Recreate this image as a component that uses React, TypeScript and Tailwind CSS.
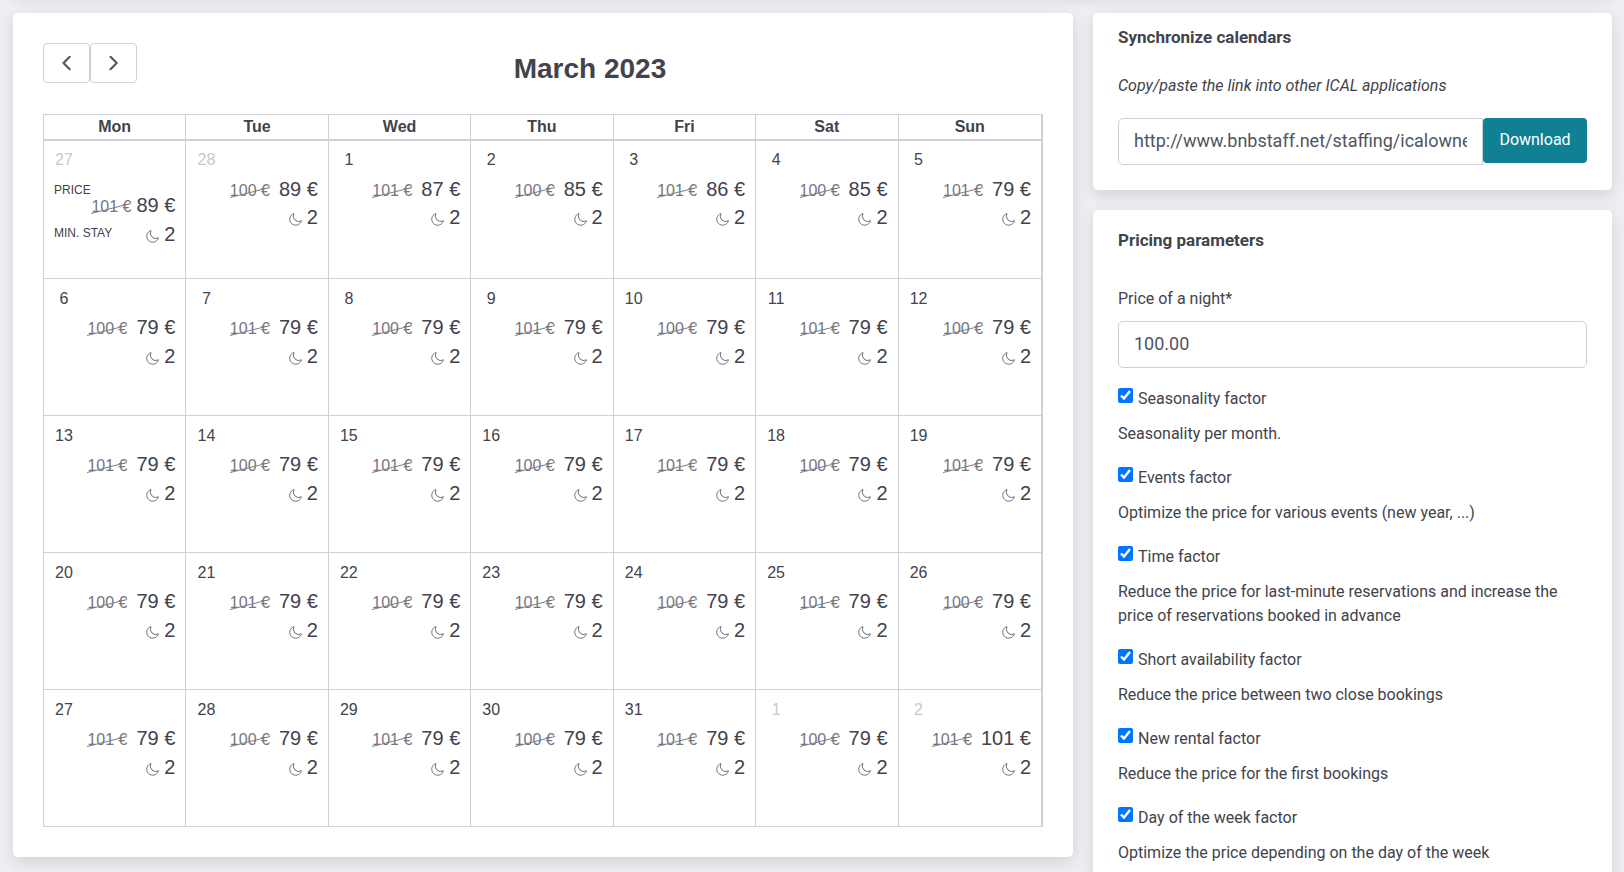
import React from "react";

type Day = { day: number; base: number; price: number; muted?: boolean };

const PRICES = [89, 89, 87, 85, 86, 85, 79];

const days: Day[] = Array.from({ length: 35 }, (_, i) => ({
  day: i < 2 ? 27 + i : i < 33 ? i - 1 : i - 32,
  base: i % 2 === 0 ? 101 : 100,
  price: i === 34 ? 101 : (PRICES[i] ?? 79),
  muted: i < 2 || i > 32,
}));

const weeks = [0, 1, 2, 3, 4].map((w) => days.slice(w * 7, w * 7 + 7));

const factors = [
  { id: "seasonality", label: "Seasonality factor", text: "Seasonality per month." },
  { id: "events", label: "Events factor", text: "Optimize the price for various events (new year, ...)" },
  {
    id: "time",
    label: "Time factor",
    text: "Reduce the price for last-minute reservations and increase the price of reservations booked in advance",
  },
  { id: "short", label: "Short availability factor", text: "Reduce the price between two close bookings" },
  { id: "rental", label: "New rental factor", text: "Reduce the price for the first bookings" },
  { id: "weekday", label: "Day of the week factor", text: "Optimize the price depending on the day of the week" },
];

const card = "rounded-[5px] bg-white shadow-[0_5px_15px_rgba(0,0,0,0.12)]";
const field =
  "h-[47px] w-full min-w-0 border border-[#cfd0d6] bg-white px-[15px] pb-0.5 text-[18px] leading-6 text-[#4f5560] outline-none";

function Chevron({ flip }: { flip?: boolean }) {
  return (
    <svg width="24" height="24" viewBox="0 0 24 24" fill="none" stroke="currentColor" strokeWidth="2.2" strokeLinecap="round" strokeLinejoin="round" aria-hidden="true">
      <path d={flip ? "M8.5 5.8 L14.7 12 L8.5 18.2" : "M14.7 5.8 L8.5 12 L14.7 18.2"} />
    </svg>
  );
}

function Moon() {
  return (
    <svg className="mt-1 text-[#6b6e79]" width="13" height="13" viewBox="0 0 12 12" fill="none" stroke="currentColor" strokeWidth="0.9" strokeLinejoin="round" aria-hidden="true">
      <path d="M4.6 0.5 A5.5 5.5 0 1 0 11.5 7.2 A5 5 0 0 1 4.6 0.5 Z" />
    </svg>
  );
}

function OldPrice({ value }: { value: number }) {
  return (
    <span className="relative text-base leading-6 text-[#74767f]">
      {value} €
      <svg className="absolute top-2 left-0 h-[11px] w-full" viewBox="0 0 40 11" preserveAspectRatio="none" aria-hidden="true">
        <path d="M0 10.5 L40 0.5" stroke="#7c7e87" strokeWidth="1" />
      </svg>
    </span>
  );
}

function DayCell({ item, first, labelled }: { item: Day; first: boolean; labelled: boolean }) {
  return (
    <div className={first ? "px-2.5 pt-2.5" : "px-2.5 pt-[11px]"}>
      <div className={`w-5 text-center text-base leading-[18px] ${item.muted ? "text-[#c8c8ca]" : ""}`}>{item.day}</div>
      {labelled ? (
        <div className="pt-3.5">
          <div className="text-xs leading-[14px]">PRICE</div>
          <div className="-mt-1.5 flex items-baseline justify-end gap-[5px] text-xl leading-7">
            <OldPrice value={item.base} />
            <span>{item.price} €</span>
          </div>
          <div className="flex items-start justify-between pt-px text-xl leading-7">
            <span className="text-xs leading-[26px]">MIN. STAY</span>
            <span className="flex items-center gap-[5px]">
              <Moon />2
            </span>
          </div>
        </div>
      ) : (
        <div className={first ? "pt-1.5" : "pt-[5px]"}>
          <div className="flex items-baseline justify-end gap-[9px] text-xl leading-7">
            <OldPrice value={item.base} />
            <span>{item.price} €</span>
          </div>
          <div className={`flex items-center justify-end gap-[5px] text-xl leading-7 ${first ? "" : "pt-px"}`}>
            <Moon />
            <span>2</span>
          </div>
        </div>
      )}
    </div>
  );
}

function Calendar() {
  return (
    <section className={`${card} p-[30px] font-['Liberation_Sans',Arial,sans-serif]`}>
      <div className="flex items-start justify-between pb-[29px]">
        <div className="flex text-[#555763]">
          <button type="button" aria-label="Previous month" className="flex h-10 w-[47px] items-center justify-center rounded border border-[#cfd0d6]">
            <Chevron />
          </button>
          <button type="button" aria-label="Next month" className="flex h-10 w-[47px] items-center justify-center rounded border border-[#cfd0d6]">
            <Chevron flip />
          </button>
        </div>
        <h2 className="pt-2.5 text-[28px] leading-8 font-bold">March 2023</h2>
        <div />
      </div>
      <table className="w-full table-fixed border-separate border-spacing-0 border border-r-2 border-[#cfd0d6]">
        <thead>
          <tr>
            {["Mon", "Tue", "Wed", "Thu", "Fri", "Sat", "Sun"].map((d) => (
              <th key={d} scope="col" className="border-r border-b-2 border-[#cfd0d6] p-0 text-base leading-6 font-bold last:border-r-0">
                {d}
              </th>
            ))}
          </tr>
        </thead>
        <tbody>
          {weeks.map((week, w) => (
            <tr key={w} className="group">
              {week.map((item, d) => (
                <td key={d} className="h-[137px] border-t border-r border-[#cfd0d6] p-0 align-top group-first:border-t-0 last:border-r-0">
                  <DayCell item={item} first={w === 0} labelled={w === 0 && d === 0} />
                </td>
              ))}
            </tr>
          ))}
        </tbody>
      </table>
    </section>
  );
}

export default function App() {
  return (
    <div className="min-h-screen overflow-hidden bg-[#eeeff3] font-[Roboto,'Liberation_Sans',sans-serif] text-base text-[#42434b]">
      <div className={`${card} -mt-7 mr-3 ml-[13px] h-[21px]`} />
      <main className="grid grid-cols-[minmax(0,1060fr)_minmax(0,519fr)] items-start gap-5 pt-5 pr-3 pl-[13px]">
        <Calendar />
        <div className="flex flex-col gap-5">
          <section className={`${card} px-[25px] pt-3 pb-[25px]`}>
            <h3 className="text-[17px] leading-6 font-bold">Synchronize calendars</h3>
            <p className="pt-[25px] leading-6 italic">
              <label htmlFor="ical">Copy/paste the link into other ICAL applications</label>
            </p>
            <div className="flex items-start pt-5">
              <input id="ical" type="text" readOnly defaultValue="http://www.bnbstaff.net/staffing/icalowner" className={`${field} rounded-l-[5px]`} />
              <button type="button" className="h-[45px] w-[104px] shrink-0 rounded bg-[#108094] pb-0.5 text-base text-white">
                Download
              </button>
            </div>
          </section>
          <section className={`${card} px-[25px] pt-[18px] pb-6`}>
            <h3 className="text-[17px] leading-6 font-bold">Pricing parameters</h3>
            <label htmlFor="night" className="block pt-[35px] leading-6">
              Price of a night*
            </label>
            <input id="night" type="text" defaultValue="100.00" className={`${field} mt-2.5 rounded-[5px]`} />
            <div className="pt-5">
              {factors.map((f) => (
                <div key={f.id} className="pb-[21px]">
                  <div className="flex items-start gap-[5px]">
                    <input id={f.id} type="checkbox" defaultChecked className="m-0 h-[15px] w-[15px] shrink-0" />
                    <label htmlFor={f.id} className="leading-[22px]">
                      {f.label}
                    </label>
                  </div>
                  <p className="pt-3 leading-6">{f.text}</p>
                </div>
              ))}
            </div>
          </section>
        </div>
      </main>
    </div>
  );
}
